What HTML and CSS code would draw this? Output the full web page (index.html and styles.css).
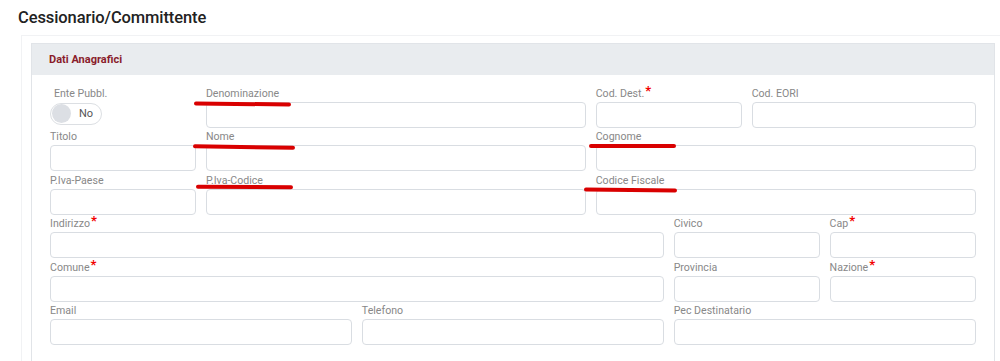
FILE: index.html
```html
<!DOCTYPE html>
<html>

<head>
    <link rel="stylesheet" href="styles.css">
</head>

<body>

    <h2 class="page-title">Cessionario/Committente</h2>

    <div class="card">
        <div class="panel">
            <div class="panel-header">Dati Anagrafici</div>
            <div class="panel-body">

                <div class="field span-2 toggle-field">
                    <label>Ente Pubbl.</label>
                    <div class="toggle">
                        <span class="knob"></span>
                        <span class="toggle-text">No</span>
                    </div>
                </div>
                <div class="field span-5">
                    <label>Denominazione</label>
                    <input type="text">
                    <span class="mark mark-denom"></span>
                </div>
                <div class="field span-2">
                    <label>Cod. Dest.<span class="req">*</span></label>
                    <input type="text">
                </div>
                <div class="field span-3">
                    <label>Cod. EORI</label>
                    <input type="text">
                </div>

                <div class="field span-2">
                    <label>Titolo</label>
                    <input type="text">
                </div>
                <div class="field span-5">
                    <label>Nome</label>
                    <input type="text">
                    <span class="mark mark-nome"></span>
                </div>
                <div class="field span-5">
                    <label>Cognome</label>
                    <input type="text">
                    <span class="mark mark-cognome"></span>
                </div>

                <div class="field span-2">
                    <label>P.Iva-Paese</label>
                    <input type="text">
                </div>
                <div class="field span-5">
                    <label>P.Iva-Codice</label>
                    <input type="text">
                    <span class="mark mark-piva"></span>
                </div>
                <div class="field span-5">
                    <label>Codice Fiscale</label>
                    <input type="text">
                    <span class="mark mark-cf"></span>
                </div>

                <div class="field span-8">
                    <label>Indirizzo<span class="req">*</span></label>
                    <input type="text">
                </div>
                <div class="field span-2">
                    <label>Civico</label>
                    <input type="text">
                </div>
                <div class="field span-2">
                    <label>Cap<span class="req">*</span></label>
                    <input type="text">
                </div>

                <div class="field span-8">
                    <label>Comune<span class="req">*</span></label>
                    <input type="text">
                </div>
                <div class="field span-2">
                    <label>Provincia</label>
                    <input type="text">
                </div>
                <div class="field span-2">
                    <label>Nazione<span class="req">*</span></label>
                    <input type="text">
                </div>

                <div class="field span-4">
                    <label>Email</label>
                    <input type="text">
                </div>
                <div class="field span-4">
                    <label>Telefono</label>
                    <input type="text">
                </div>
                <div class="field span-4">
                    <label>Pec Destinatario</label>
                    <input type="text">
                </div>

            </div>
        </div>
    </div>

</body>

</html>
```

FILE: styles.css
```css
body {
    font-family: Roboto, "Liberation Sans", Arial, sans-serif;
    margin: 0;
    background-color: #fff;
    overflow: hidden;
}

.page-title {
    margin: 0;
    padding: 8px 0 0 18px;
    height: 27px;
    font-size: 16.5px;
    line-height: 20px;
    font-weight: 500;
    color: #222;
    letter-spacing: -0.1px;
}

.card {
    margin-left: 21px;
    width: 984px;
    padding: 7px 10px 0 9px;
    border: 1px solid #f1f2f4;
    border-bottom: none;
    box-sizing: border-box;
}

.panel {
    width: 964px;
    border: 1px solid #e1e4e8;
    border-bottom: none;
    box-sizing: border-box;
}

.panel-header {
    height: 31px;
    line-height: 31px;
    padding-left: 17px;
    background-color: #e9ecef;
    color: #8a1c2b;
    font-size: 11px;
    font-weight: 700;
}

.panel-body {
    display: grid;
    grid-template-columns: repeat(12, 1fr);
    column-gap: 9.5px;
    row-gap: 0.6px;
    padding: 9.5px 18px 20px 18px;
}

.field {
    position: relative;
    display: flex;
    flex-direction: column;
}

.span-2 { grid-column: span 2; }
.span-3 { grid-column: span 3; }
.span-4 { grid-column: span 4; }
.span-5 { grid-column: span 5; }
.span-8 { grid-column: span 8; }

.field label {
    height: 17px;
    line-height: 17px;
    font-size: 10.6px;
    color: #888;
    white-space: nowrap;
}

.req {
    color: #f20000;
    font-size: 13px;
    font-weight: 700;
    line-height: 10px;
    margin-left: 1px;
    position: relative;
    top: -2px;
}

.field input {
    height: 26px;
    margin: 0;
    padding: 0 6px;
    border: 1px solid #d9dde2;
    border-radius: 4px;
    background-color: #fff;
    box-sizing: border-box;
    width: 100%;
}

/* toggle */
.toggle-field label {
    width: 52px;
    text-align: center;
    padding-left: 4px;
}

.toggle {
    width: 52px;
    height: 22px;
    margin-top: 1px;
    border: 1px solid #dcdfe3;
    border-radius: 12px;
    box-sizing: border-box;
    display: flex;
    align-items: center;
    padding-left: 1px;
}

.knob {
    width: 19px;
    height: 19px;
    border-radius: 50%;
    background-color: #dcdfe4;
}

.toggle-text {
    margin-left: 8px;
    font-size: 11px;
    color: #555;
}

/* red marker strokes over the labels */
.mark {
    position: absolute;
    height: 4px;
    border-radius: 3px;
    background-color: #d90000;
}

.mark-denom { left: -12px; top: 17px; width: 97px; transform: rotate(0.6deg); }
.mark-nome { left: -13px; top: 17px; width: 102px; transform: rotate(0.8deg); }
.mark-piva { left: -10px; top: 13.5px; width: 97px; transform: rotate(0.4deg); }
.mark-cognome { left: -7px; top: 15.5px; width: 87px; }
.mark-cf { left: -12px; top: 16.5px; width: 93px; transform: rotate(0.5deg); }
```
